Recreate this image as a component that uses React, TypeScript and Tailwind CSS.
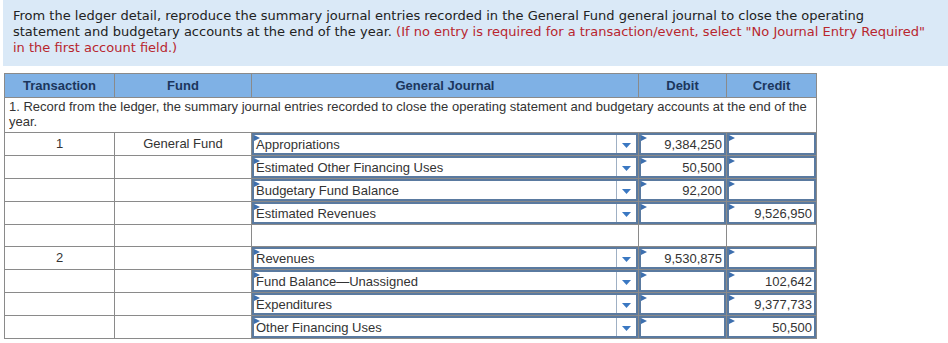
import React from "react";

type Line = { acct: string; debit?: string; credit?: string };
const entries: { n: string; fund: string; lines: Line[] }[] = [
  {
    n: "1",
    fund: "General Fund",
    lines: [
      { acct: "Appropriations", debit: "9,384,250" },
      { acct: "Estimated Other Financing Uses", debit: "50,500" },
      { acct: "Budgetary Fund Balance", debit: "92,200" },
      { acct: "Estimated Revenues", credit: "9,526,950" },
    ],
  },
  {
    n: "2",
    fund: "",
    lines: [
      { acct: "Revenues", debit: "9,530,875" },
      { acct: "Fund Balance\u2014Unassigned", credit: "102,642" },
      { acct: "Expenditures", credit: "9,377,733" },
      { acct: "Other Financing Uses", credit: "50,500" },
    ],
  },
];

function Flag() {
  return (
    <svg className="absolute left-0 top-0" width="6" height="6" viewBox="0 0 6 6">
      <polygon points="0,0 6,3 0,6" fill="#3d6fae" />
    </svg>
  );
}

function Box({ children }: { children?: React.ReactNode }) {
  return (
    <div className="relative h-[22px] border-2 border-[#5a7aa0] bg-white px-[2px] flex items-center justify-end leading-none">
      <Flag />
      {children}
    </div>
  );
}

const td = "border border-[#8a8a8a]";

export default function App() {
  return (
    <div className="w-[948px] h-[343px] bg-white overflow-hidden">
      <div
        className="ml-[3px] h-[66px] bg-[#dae9f7] pl-[10px] pt-[8px] text-[13px] leading-[16px] text-[#222] whitespace-nowrap"
        style={{ fontFamily: "Verdana, 'DejaVu Sans', sans-serif" }}
      >
        From the ledger detail, reproduce the summary journal entries recorded in the General Fund general journal to close the operating
        <br />
        statement and budgetary accounts at the end of the year.{" "}
        <span className="text-[#b8262e]">
          (If no entry is required for a transaction/event, select "No Journal Entry Required"
          <br />
          in the first account field.)
        </span>
      </div>
      <table
        className="mt-[7px] ml-[4px] border-collapse table-fixed text-[13px] text-[#333]"
        style={{ fontFamily: "'Liberation Sans', Arial, sans-serif", width: 812 }}
      >
        <colgroup>
          <col style={{ width: 110 }} />
          <col style={{ width: 137 }} />
          <col style={{ width: 387 }} />
          <col style={{ width: 88 }} />
          <col style={{ width: 90 }} />
        </colgroup>
        <thead>
          <tr className="h-[24px] bg-[#7fb1e5] text-[#1c365c]">
            <th className={td + " font-bold"}>Transaction</th>
            <th className={td + " font-bold"}>Fund</th>
            <th className={td + " font-bold"}>General Journal</th>
            <th className={td + " font-bold"}>Debit</th>
            <th className={td + " font-bold"}>Credit</th>
          </tr>
        </thead>
        <tbody>
          <tr className="h-[35px]">
            <td colSpan={5} className={td + " px-[4px] pt-[1px] leading-[15px] align-top"}>
              1. Record from the ledger, the summary journal entries recorded to close the operating statement and budgetary accounts at the end of the year.
            </td>
          </tr>
          {entries.map((e, ei) => (
            <React.Fragment key={e.n}>
              {ei > 0 && (
                <tr>
                  <td className={td + " h-[22px] p-0"} />
                  <td className={td + " p-0"} />
                  <td className={td + " p-0"} />
                  <td className={td + " p-0"} />
                  <td className={td + " p-0"} />
                </tr>
              )}
              {e.lines.map((l, li) => (
                <tr key={li}>
                  <td className={td + " text-center p-0"}>{li === 0 ? e.n : ""}</td>
                  <td className={td + " text-center p-0"}>{li === 0 ? e.fund : ""}</td>
                  <td className={td + " p-0"}>
                    <div className="relative h-[22px] border-2 border-[#5a7aa0] bg-white flex items-stretch leading-none">
                      <Flag />
                      <div className="flex-1 flex items-center pl-[2px]">{l.acct}</div>
                      <div className="w-[20px] border-l border-[#9fb0c4] flex items-center justify-center pt-[2px]">
                        <svg width="9" height="5" viewBox="0 0 9 5">
                          <polygon points="0,0 9,0 4.5,5" fill="#3a78c2" />
                        </svg>
                      </div>
                    </div>
                  </td>
                  <td className={td + " p-0"}>
                    <Box>{l.debit}</Box>
                  </td>
                  <td className={td + " p-0"}>
                    <Box>{l.credit}</Box>
                  </td>
                </tr>
              ))}
            </React.Fragment>
          ))}
        </tbody>
      </table>
    </div>
  );
}
